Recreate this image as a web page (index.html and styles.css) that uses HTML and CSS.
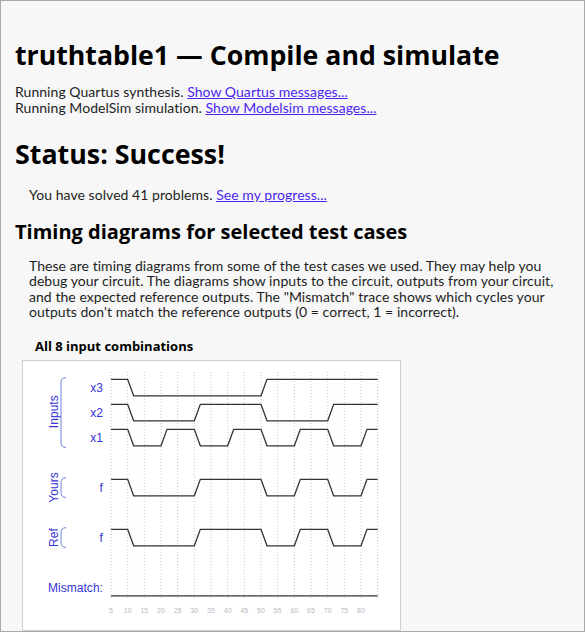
FILE: index.html
```html
<!DOCTYPE html>
<html>
<head>
<meta charset="utf-8">
<link rel="stylesheet" href="styles.css">
</head>
<body>
<div class="page">
  <h1 class="title">truthtable1 — Compile and simulate</h1>
  <p class="log">Running Quartus synthesis. <a href="#">Show Quartus messages...</a><br>Running ModelSim simulation. <a href="#">Show Modelsim messages...</a></p>
  <h2 class="status">Status: Success!</h2>
  <p class="indent">You have solved 41 problems. <a href="#">See my progress...</a></p>
  <h3 class="section">Timing diagrams for selected test cases</h3>
  <p class="indent desc">These are timing diagrams from some of the test cases we used. They may help you debug your circuit. The diagrams show inputs to the circuit, outputs from your circuit, and the expected reference outputs. The "Mismatch" trace shows which cycles your outputs don't match the reference outputs (0 = correct, 1 = incorrect).</p>
  <div class="case-title">All 8 input combinations</div>
  <div class="wave-box">
    <svg class="wave" width="377" height="269" viewBox="0 0 377 269">
      <path class="grid" d="M88 11V237M104.67 11V237M121.33 11V237M138 11V237M154.67 11V237M171.33 11V237M188 11V237M204.67 11V237M221.33 11V237M238 11V237M254.67 11V237M271.33 11V237M288 11V237M304.67 11V237M321.33 11V237M338 11V237M354.67 11V237"/>
      <g class="group-label">
        <text transform="translate(35.3 50.7) rotate(-90)" text-anchor="middle">Inputs</text>
        <text transform="translate(35.3 126.5) rotate(-90)" text-anchor="middle">Yours</text>
        <text transform="translate(35.3 176.5) rotate(-90)" text-anchor="middle">Ref</text>
      </g>
      <path class="bracket" d="M43 16.7Q38 16.7 38 21.7L38 81.4Q38 86.4 43 86.4"/>
      <path class="bracket" d="M43 116.7Q38 116.7 38 121.7L38 131.4Q38 136.4 43 136.4"/>
      <path class="bracket" d="M43 166.7Q38 166.7 38 171.7L38 181.4Q38 186.4 43 186.4"/>
      <g class="sig-label" text-anchor="end">
        <text x="80" y="30.8">x3</text>
        <text x="80" y="55.8">x2</text>
        <text x="80" y="80.8">x1</text>
        <text x="80" y="130.8">f</text>
        <text x="80" y="180.8">f</text>
        <text x="80" y="230.8">Mismatch:</text>
      </g>
      <g class="trace">
        <polyline points="88,18.3 104.67,18.3 110.67,34.8 238,34.8 244,18.3 354.67,18.3"/>
        <polyline points="88,43.3 104.67,43.3 110.67,59.8 171.33,59.8 177.33,43.3 238,43.3 244,59.8 304.67,59.8 310.67,43.3 354.67,43.3"/>
        <polyline points="88,68.3 104.67,68.3 110.67,84.8 138,84.8 144,68.3 171.33,68.3 177.33,84.8 204.67,84.8 210.67,68.3 238,68.3 244,84.8 271.33,84.8 277.33,68.3 304.67,68.3 310.67,84.8 338,84.8 344,68.3 354.67,68.3"/>
        <polyline points="88,118.3 104.67,118.3 110.67,134.8 171.33,134.8 177.33,118.3 238,118.3 244,134.8 271.33,134.8 277.33,118.3 304.67,118.3 310.67,134.8 338,134.8 344,118.3 354.67,118.3"/>
        <polyline points="88,168.3 104.67,168.3 110.67,184.8 171.33,184.8 177.33,168.3 238,168.3 244,184.8 271.33,184.8 277.33,168.3 304.67,168.3 310.67,184.8 338,184.8 344,168.3 354.67,168.3"/>
        <polyline points="88,234.8 354.67,234.8"/>
      </g>
      <g class="tick" text-anchor="middle">
        <text x="88" y="251.7">5</text>
        <text x="104.67" y="251.7">10</text>
        <text x="121.33" y="251.7">15</text>
        <text x="138" y="251.7">20</text>
        <text x="154.67" y="251.7">25</text>
        <text x="171.33" y="251.7">30</text>
        <text x="188" y="251.7">35</text>
        <text x="204.67" y="251.7">40</text>
        <text x="221.33" y="251.7">45</text>
        <text x="238" y="251.7">50</text>
        <text x="254.67" y="251.7">55</text>
        <text x="271.33" y="251.7">60</text>
        <text x="288" y="251.7">65</text>
        <text x="304.67" y="251.7">70</text>
        <text x="321.33" y="251.7">75</text>
        <text x="338" y="251.7">80</text>
      </g>
    </svg>
  </div>
</div>
</body>
</html>
```
FILE: styles.css
```css
html, body {
  margin: 0;
  padding: 0;
  background: #f7f7f7;
}
.page {
  box-sizing: border-box;
  min-height: 632px;
  border: 1px solid #a9a9a9;
  background: #f7f7f7;
  padding: 35px 14px 0;
  font-family: Lato, "Liberation Sans", sans-serif;
  font-size: 14px;
  letter-spacing: 0.05px;
  line-height: 15.5px;
  color: #1e1e1e;
}
a {
  color: #4b26f0;
  text-decoration: underline;
}
.title, .status, .section, .case-title {
  font-family: "Open Sans", "Liberation Sans", sans-serif;
  font-weight: 700;
  color: #000;
  margin: 0;
  letter-spacing: 0;
}
.title {
  font-size: 26.7px;
  line-height: 38px;
}
.log {
  margin: 10px 0 0;
}
.status {
  font-size: 26.8px;
  line-height: 34px;
  margin-top: 22px;
}
.indent {
  margin: 16px 0 0 14px;
}
.section {
  font-size: 20px;
  line-height: 27px;
  margin-top: 15px;
}
.desc {
  margin-top: 13px;
}
.case-title {
  font-size: 13px;
  line-height: 18px;
  margin: 17px 0 0 20px;
}
.wave-box {
  margin: 5px 0 0 7px;
  width: 377px;
  height: 269px;
  border: 1px solid #cfcfcf;
  background: #fff;
}
.wave {
  display: block;
  font-family: "Liberation Sans", Arial, sans-serif;
}
.grid {
  stroke: #c8c8c8;
  stroke-width: 1;
  stroke-dasharray: 1 2;
  fill: none;
}
.group-label text, .sig-label text {
  font-size: 12px;
  fill: #3434d2;
}
.bracket {
  fill: none;
  stroke: #6f82db;
  stroke-width: 1;
}
.trace polyline {
  fill: none;
  stroke: #333;
  stroke-width: 1.3;
}
.tick text {
  font-size: 7px;
  fill: #b9b9c2;
}
```
